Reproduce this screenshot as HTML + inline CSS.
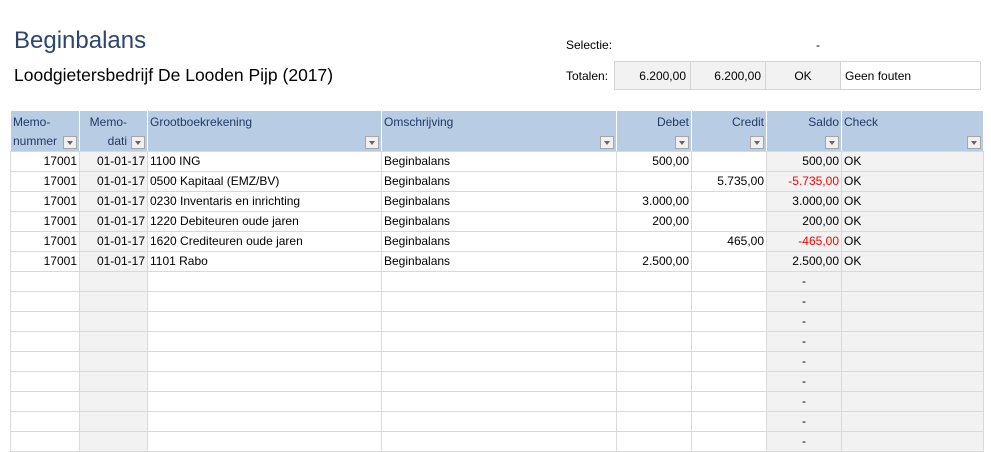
<!DOCTYPE html><html><head><style>
body{margin:0;width:991px;height:451px;background:#fff;font-family:"Liberation Sans",sans-serif;font-size:12px;color:#000;position:relative;overflow:hidden}
.a{position:absolute;white-space:nowrap}
.box{position:absolute;top:61px;height:29px;border:1px solid #d4d4d4;box-sizing:border-box;line-height:28px;font-size:12px;padding:0 4px}
table{position:absolute;left:10px;top:110px;border-collapse:collapse;table-layout:fixed}
td{border:1px solid #d9d9d9;height:19px;padding:0 2px;font-size:12px;line-height:19px;overflow:hidden;white-space:nowrap}
th{background:#b8cce4;color:#1f3b66;font-weight:normal;font-size:12px;height:35px;border:1px solid #fff;border-bottom:1px solid #d9d9d9;position:relative;vertical-align:top;padding:2px 2px 0;text-align:left;line-height:19px}
th.r{text-align:right}
.dd{position:absolute;right:2px;bottom:2px;width:14px;height:13px;background:#f0f0f0;border:1px solid #a6a6a6;box-sizing:border-box}
.dd:after{content:"";position:absolute;left:3px;top:4px;border-left:3px solid transparent;border-right:3px solid transparent;border-top:4px solid #666}
.r{text-align:right}.g{background:#f2f2f2}.red{color:#f00}
</style></head><body>
<div class="a" style="left:14px;top:27px;font-size:24px;color:#2c4670">Beginbalans</div>
<div class="a" style="left:14px;top:65px;font-size:17.5px">Loodgietersbedrijf De Looden Pijp (2017)</div>
<div class="a" style="left:566px;top:38px">Selectie:</div>
<div class="a" style="left:816px;top:38px">-</div>
<div class="a" style="left:566px;top:69px">Totalen:</div>
<div class="box g r" style="left:614px;width:77px">6.200,00</div>
<div class="box g r" style="left:690px;width:76px">6.200,00</div>
<div class="box g" style="left:765px;width:76px;text-align:center">OK</div>
<div class="box" style="left:840px;width:141px">Geen fouten</div>
<table>
<colgroup><col style="width:69px"><col style="width:68px"><col style="width:234px"><col style="width:235px"><col style="width:75px"><col style="width:75px"><col style="width:75px"><col style="width:142px"></colgroup>
<tr><th>Memo-<br>nummer<span class="dd"></span></th><th class="r" style="padding-right:20px">Memo-<br>dati<span class="dd"></span></th><th>Grootboekrekening<span class="dd"></span></th><th>Omschrijving<span class="dd"></span></th><th class="r">Debet<span class="dd"></span></th><th class="r">Credit<span class="dd"></span></th><th class="r">Saldo<span class="dd"></span></th><th>Check<span class="dd"></span></th></tr>
<tr><td class="r">17001</td><td class="r g">01-01-17</td><td>1100 ING</td><td>Beginbalans</td><td class="r">500,00</td><td></td><td class="r g">500,00</td><td class="g">OK</td></tr>
<tr><td class="r">17001</td><td class="r g">01-01-17</td><td>0500 Kapitaal (EMZ/BV)</td><td>Beginbalans</td><td></td><td class="r">5.735,00</td><td class="r g red">-5.735,00</td><td class="g">OK</td></tr>
<tr><td class="r">17001</td><td class="r g">01-01-17</td><td>0230 Inventaris en inrichting</td><td>Beginbalans</td><td class="r">3.000,00</td><td></td><td class="r g">3.000,00</td><td class="g">OK</td></tr>
<tr><td class="r">17001</td><td class="r g">01-01-17</td><td>1220 Debiteuren oude jaren</td><td>Beginbalans</td><td class="r">200,00</td><td></td><td class="r g">200,00</td><td class="g">OK</td></tr>
<tr><td class="r">17001</td><td class="r g">01-01-17</td><td>1620 Crediteuren oude jaren</td><td>Beginbalans</td><td></td><td class="r">465,00</td><td class="r g red">-465,00</td><td class="g">OK</td></tr>
<tr><td class="r">17001</td><td class="r g">01-01-17</td><td>1101 Rabo</td><td>Beginbalans</td><td class="r">2.500,00</td><td></td><td class="r g">2.500,00</td><td class="g">OK</td></tr>
<tr><td></td><td class="g"></td><td></td><td></td><td></td><td></td><td class="g" style="text-align:center">-</td><td class="g"></td></tr>
<tr><td></td><td class="g"></td><td></td><td></td><td></td><td></td><td class="g" style="text-align:center">-</td><td class="g"></td></tr>
<tr><td></td><td class="g"></td><td></td><td></td><td></td><td></td><td class="g" style="text-align:center">-</td><td class="g"></td></tr>
<tr><td></td><td class="g"></td><td></td><td></td><td></td><td></td><td class="g" style="text-align:center">-</td><td class="g"></td></tr>
<tr><td></td><td class="g"></td><td></td><td></td><td></td><td></td><td class="g" style="text-align:center">-</td><td class="g"></td></tr>
<tr><td></td><td class="g"></td><td></td><td></td><td></td><td></td><td class="g" style="text-align:center">-</td><td class="g"></td></tr>
<tr><td></td><td class="g"></td><td></td><td></td><td></td><td></td><td class="g" style="text-align:center">-</td><td class="g"></td></tr>
<tr><td></td><td class="g"></td><td></td><td></td><td></td><td></td><td class="g" style="text-align:center">-</td><td class="g"></td></tr>
<tr><td></td><td class="g"></td><td></td><td></td><td></td><td></td><td class="g" style="text-align:center">-</td><td class="g"></td></tr>
</table>
</body></html>
